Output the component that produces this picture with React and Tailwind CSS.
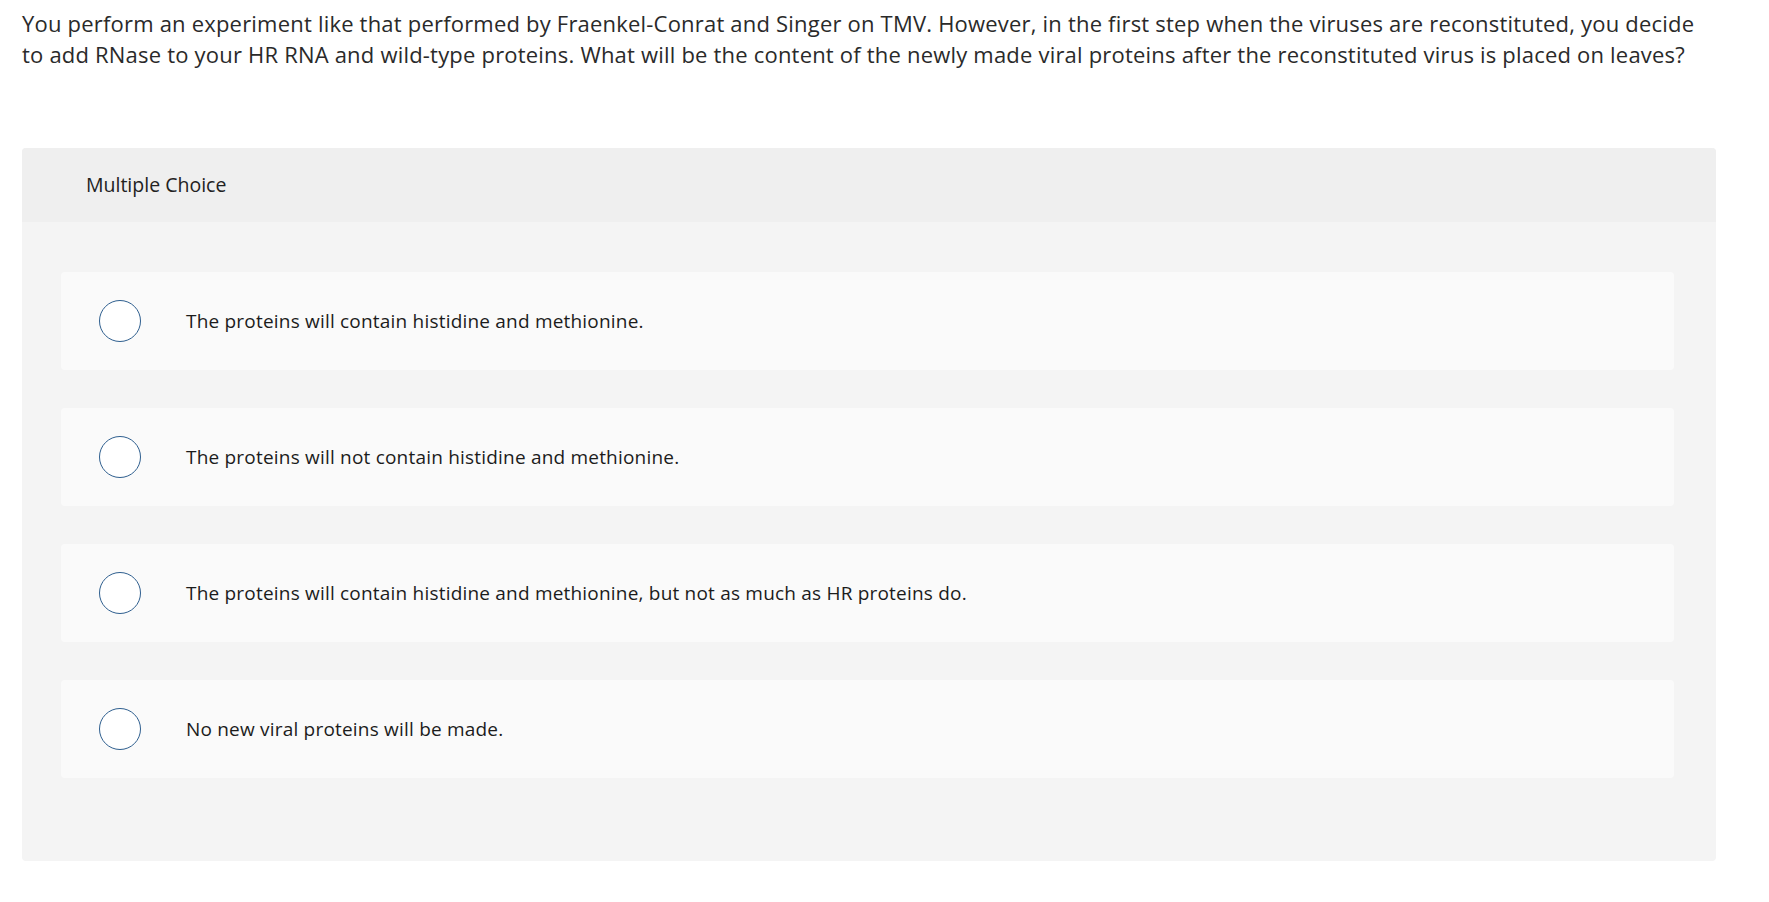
const question =
  "You perform an experiment like that performed by Fraenkel-Conrat and Singer on TMV. However, in the first step when the viruses are reconstituted, you decide to add RNase to your HR RNA and wild-type proteins. What will be the content of the newly made viral proteins after the reconstituted virus is placed on leaves?";

const choices = [
  "The proteins will contain histidine and methionine.",
  "The proteins will not contain histidine and methionine.",
  "The proteins will contain histidine and methionine, but not as much as HR proteins do.",
  "No new viral proteins will be made.",
];

function Choice({ text }) {
  return (
    <label className="flex h-[98px] cursor-pointer items-center gap-[45px] rounded bg-[#fafafa] pl-[38px]">
      <span className="h-[42px] w-[42px] shrink-0 rounded-full border-[1.5px] border-[#2f5f8f] bg-white" />
      <span className="text-[19px] tracking-[0.2px] text-[#1c1c1c]">{text}</span>
    </label>
  );
}

export default function App() {
  return (
    <div className="min-h-[902px] bg-white font-['Open_Sans','Liberation_Sans',sans-serif]">
      <p className="w-[1700px] pl-[22px] pt-[8px] text-[22px] leading-[31px] tracking-[0.2px] text-[#2a2a2a]">
        {question}
      </p>

      <section className="mx-[22px] mt-[78px] w-[1694px] overflow-hidden rounded bg-[#f4f4f4]">
        <div className="flex h-[74px] items-center bg-[#efefef] pl-[64px] text-[19.5px] text-[#222]">
          Multiple Choice
        </div>
        <div className="grid gap-[38px] pl-[39px] pr-[42px] pt-[50px] pb-[83px]">
          {choices.map((choice) => (
            <Choice key={choice} text={choice} />
          ))}
        </div>
      </section>
    </div>
  );
}
